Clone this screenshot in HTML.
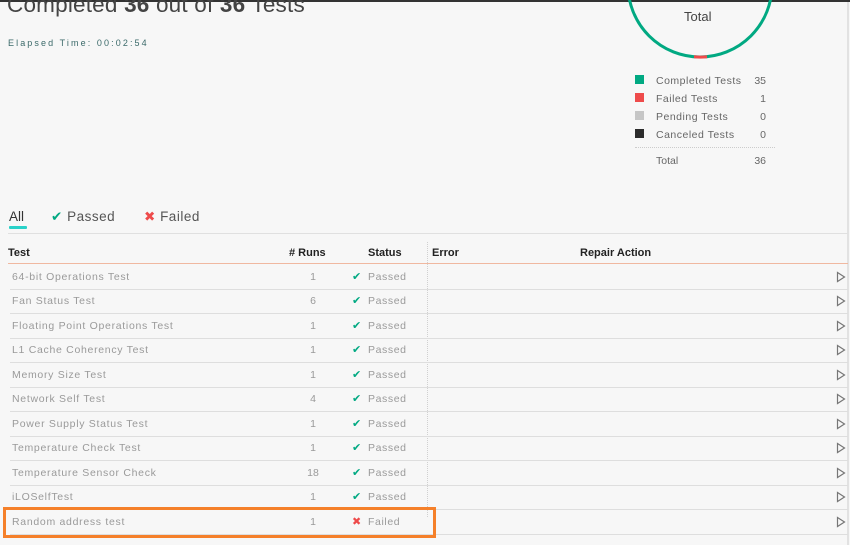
<!DOCTYPE html>
<html><head><meta charset="utf-8"><style>
*{margin:0;padding:0;box-sizing:border-box}
body{width:850px;height:545px;background:#f7f7f7;font-family:"Liberation Sans","DejaVu Sans",sans-serif;position:relative;overflow:hidden;color:#333}
.a{position:absolute;white-space:nowrap}
.row{position:absolute;left:10px;width:838px;height:1px;background:#dedede}
.t{left:12px;font-size:10.5px;color:#9a9a9a;letter-spacing:0.7px}
.r{left:300px;width:26px;text-align:center;font-size:10.5px;color:#9a9a9a}
.s{left:352px;font-size:10.5px;line-height:13px;color:#9a9a9a;letter-spacing:0.6px}
.s b{display:inline-block;width:16px;font-size:11px;line-height:13px;vertical-align:top}
.ar{left:836px}
</style></head><body>
<div class="a" style="left:0;top:0;width:850px;height:2px;background:#333"></div>
<div class="a" style="left:847px;top:2px;width:2px;height:543px;background:#e2e2e2"></div>
<div class="a" style="left:7px;top:-8px;font-size:22.5px;color:#444;letter-spacing:0.2px">Completed <b>36</b> out of <b>36</b> Tests</div>
<div class="a" style="left:8px;top:38px;font-size:9px;color:#3b6a6a;letter-spacing:2.1px">Elapsed Time: 00:02:54</div>
<svg class="a" style="left:600px;top:0" width="200" height="70"><circle cx="100" cy="-15" r="72" fill="none" stroke="#01a982" stroke-width="3"/><path d="M94 56.8 A72 72 0 0 0 107 56.8" fill="none" stroke="#ee4b4b" stroke-width="3"/></svg>
<div class="a" style="left:684px;top:9px;font-size:13px;color:#444">Total</div>
<div class="a" style="left:635px;top:75px;width:9px;height:9px;background:#01a982"></div>
<div class="a" style="left:635px;top:93px;width:9px;height:9px;background:#ee4b4b"></div>
<div class="a" style="left:635px;top:111px;width:9px;height:9px;background:#c6c6c6"></div>
<div class="a" style="left:635px;top:129px;width:9px;height:9px;background:#2c2c2c"></div>
<div class="a" style="left:656px;top:72px;font-size:10.5px;color:#666;line-height:18px;letter-spacing:0.5px">Completed Tests<br>Failed Tests<br>Pending Tests<br>Canceled Tests</div>
<div class="a" style="left:748px;top:72px;width:18px;text-align:right;font-size:10.5px;color:#666;line-height:18px">35<br>1<br>0<br>0</div>
<div class="a" style="left:635px;top:147px;width:140px;border-top:1px dotted #ccc"></div>
<div class="a" style="left:656px;top:155px;font-size:10.5px;color:#666">Total</div>
<div class="a" style="left:748px;top:155px;width:18px;text-align:right;font-size:10.5px;color:#666">36</div>

<div class="a" style="left:9px;top:209px;font-size:13.5px;color:#333">All</div>
<div class="a" style="left:9px;top:226px;width:18px;height:3px;background:#2ad2c9;border-radius:1px"></div>
<div class="a" style="left:51px;top:209px;font-size:13.5px;color:#555;letter-spacing:0.5px"><span style="color:#01a982;font-weight:bold">✔</span> Passed</div>
<div class="a" style="left:144px;top:209px;font-size:13.5px;color:#555;letter-spacing:0.5px"><span style="color:#ee4b4b;font-weight:bold">✖</span> Failed</div>
<div class="a" style="left:8px;top:233px;width:840px;height:1px;background:#e0e0e0"></div>

<div class="a" style="left:8px;top:247px;font-size:11px;font-weight:bold;color:#222">Test</div>
<div class="a" style="left:289px;top:247px;font-size:11px;font-weight:bold;color:#222"># Runs</div>
<div class="a" style="left:368px;top:247px;font-size:11px;font-weight:bold;color:#222">Status</div>
<div class="a" style="left:432px;top:247px;font-size:11px;font-weight:bold;color:#222">Error</div>
<div class="a" style="left:580px;top:247px;font-size:11px;font-weight:bold;color:#222">Repair Action</div>
<div class="a" style="left:8px;top:263px;width:840px;height:1px;background:#f0b8a0"></div>
<div class="a" style="left:427px;top:242px;height:275px;border-left:1px dotted #d0d0d0"></div>

<div id="rows"></div>
<script>
var d=[["64-bit Operations Test",1],["Fan Status Test",6],["Floating Point Operations Test",1],["L1 Cache Coherency Test",1],["Memory Size Test",1],["Network Self Test",4],["Power Supply Status Test",1],["Temperature Check Test",1],["Temperature Sensor Check",18],["iLOSelfTest",1],["Random address test",1,1]];
var h="";d.forEach(function(r,i){var y=270.5+i*24.5;
h+='<div class="a t" style="top:'+y+'px">'+r[0]+'</div><div class="a r" style="top:'+y+'px">'+r[1]+'</div>';
h+=r[2]?'<div class="a s" style="top:'+y+'px"><b style="color:#ee4b4b">✖</b>Failed</div>':'<div class="a s" style="top:'+y+'px"><b style="color:#01a982">✔</b>Passed</div>';
h+='<svg class="a ar" style="top:'+(y)+'px" width="10" height="12"><path d="M1.5 1.5 L8.5 6 L1.5 10.5 Z" fill="none" stroke="#777" stroke-width="1.2"/></svg>';
h+='<div class="row" style="top:'+(y+18)+'px"></div>';});
document.getElementById("rows").innerHTML=h;
</script>
<div class="a" style="left:3px;top:507px;width:433px;height:31px;border:3px solid #f5802a"></div>
</body></html>
